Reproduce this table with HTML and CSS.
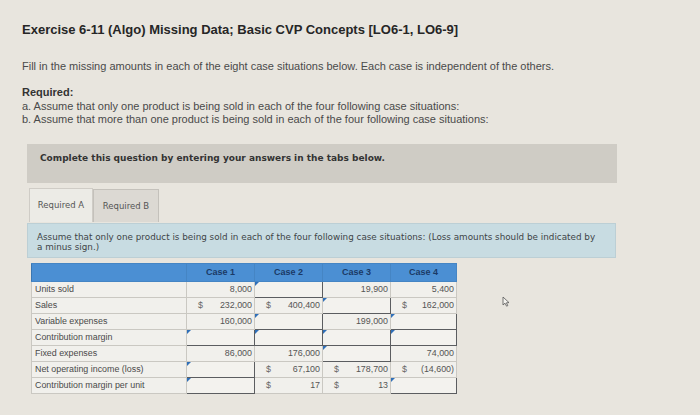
FILE: index.html
```html
<!DOCTYPE html>
<html>
<head>
<meta charset="utf-8">
<link rel="stylesheet" href="styles.css">
</head>
<body>
<div class="page">
  <h1 class="title">Exercise 6-11 (Algo) Missing Data; Basic CVP Concepts [LO6-1, LO6-9]</h1>
  <p class="intro">Fill in the missing amounts in each of the eight case situations below. Each case is independent of the others.</p>
  <div class="req">
    <div class="req-head">Required:</div>
    <div>a. Assume that only one product is being sold in each of the four following case situations:</div>
    <div>b. Assume that more than one product is being sold in each of the four following case situations:</div>
  </div>
  <div class="banner">Complete this question by entering your answers in the tabs below.</div>
  <div class="tabs">
    <div class="tab active">Required A</div>
    <div class="tab">Required B</div>
  </div>
  <div class="info">Assume that only one product is being sold in each of the four following case situations: (Loss amounts should be indicated by a minus sign.)</div>
  <table class="grid">
    <colgroup>
      <col class="c-label"><col class="c-case"><col class="c-case"><col class="c-case"><col class="c-case4">
    </colgroup>
    <thead>
      <tr><th></th><th>Case 1</th><th>Case 2</th><th>Case 3</th><th>Case 4</th></tr>
    </thead>
    <tbody>
      <tr><td class="lbl">Units sold</td><td class="val">8,000</td><td class="inp"></td><td class="val">19,900</td><td class="val">5,400</td></tr>
      <tr><td class="lbl">Sales</td><td class="val"><span class="cur">$</span>232,000</td><td class="val"><span class="cur">$</span>400,400</td><td class="inp"></td><td class="val"><span class="cur">$</span>162,000</td></tr>
      <tr><td class="lbl">Variable expenses</td><td class="val">160,000</td><td class="inp"></td><td class="val">199,000</td><td class="inp"></td></tr>
      <tr><td class="lbl">Contribution margin</td><td class="inp"></td><td class="inp"></td><td class="inp"></td><td class="inp"></td></tr>
      <tr><td class="lbl">Fixed expenses</td><td class="val">86,000</td><td class="val">176,000</td><td class="inp"></td><td class="val">74,000</td></tr>
      <tr><td class="lbl">Net operating income (loss)</td><td class="inp"></td><td class="val"><span class="cur">$</span>67,100</td><td class="val"><span class="cur">$</span>178,700</td><td class="val"><span class="cur">$</span>(14,600)</td></tr>
      <tr><td class="lbl">Contribution margin per unit</td><td class="inp"></td><td class="val"><span class="cur">$</span>17</td><td class="val"><span class="cur">$</span>13</td><td class="inp"></td></tr>
    </tbody>
  </table>
  <svg class="pointer" width="8" height="11" viewBox="0 0 8 11"><path d="M1 1 L1 9 L3 7.2 L4.6 10.2 L5.8 9.6 L4.4 6.8 L7 6.6 Z" fill="#f4f3ef" stroke="#555" stroke-width="0.8"/></svg>
</div>
</body>
</html>
```
FILE: styles.css
```css
html, body { margin: 0; padding: 0; }
body {
  background: #e8e5de;
  width: 700px;
  height: 415px;
  overflow: hidden;
  font-family: "Liberation Sans", Arial, sans-serif;
  color: #444;
}
.page {
  position: relative;
  padding: 21px 0 0 22px;
}
.title {
  margin: 0;
  font-size: 13px;
  line-height: 18px;
  font-weight: bold;
  color: #262626;
}
.intro {
  margin: 21px 0 0 0;
  font-size: 11px;
  line-height: 13px;
  color: #4a4a4a;
}
.req {
  margin-top: 13px;
  font-size: 11px;
  line-height: 13.5px;
  color: #4a4a4a;
}
.req-head { font-weight: bold; color: #333; }
.banner {
  margin: 17px 0 0 5px;
  width: 590px;
  height: 39px;
  box-sizing: border-box;
  padding: 9px 0 0 13px;
  background: #cfccc5;
  font-family: "DejaVu Sans", Verdana, sans-serif;
  font-weight: bold;
  font-size: 9px;
  color: #333;
}
.tabs {
  display: flex;
  margin: 5px 0 0 7px;
  height: 34px;
  align-items: flex-end;
}
.tab {
  box-sizing: border-box;
  height: 33px;
  width: 66px;
  padding-top: 11px;
  text-align: center;
  font-family: "DejaVu Sans", Verdana, sans-serif;
  font-size: 8.5px;
  color: #555;
  background: #dcd9d3;
  border: 1px solid #c4c1bb;
  border-bottom: none;
}
.tab.active {
  width: 64px;
  height: 34px;
  background: #ecebe6;
  border-color: #cfccc6;
}
.info {
  margin: 1px 0 0 5px;
  width: 589px;
  height: 35px;
  box-sizing: border-box;
  padding: 8px 14px 0 9px;
  background: #c8dce2;
  border: 1px solid #bccfd5;
  font-family: "DejaVu Sans", Verdana, sans-serif;
  font-size: 8.8px;
  line-height: 10px;
  color: #3e4447;
}
.grid {
  margin: 5px 0 0 9px;
  border-collapse: collapse;
  table-layout: fixed;
  width: 425px;
  font-size: 8.9px;
}
.c-label { width: 155px; }
.c-case { width: 68px; }
.c-case4 { width: 66px; }
.grid th {
  height: 17px;
  padding: 0;
  background: #4b8fd3;
  color: #1b3a66;
  font-weight: bold;
  font-size: 9px;
  border: 1px solid #4585c4;
  border-left-color: #3b76b0;
}
.grid td {
  height: 15px;
  padding: 0 2px;
  border: 1px solid #cac8c2;
  background: #f1f0ec;
  color: #555;
  white-space: nowrap;
}
.grid td.lbl { padding-left: 3px; color: #4a4a4a; }
.grid td.val { text-align: right; }
.grid td.val .cur { float: left; padding-left: 9px; color: #666; }
.grid td.inp {
  position: relative;
  background: #f3f2ee;
  border: 1.5px solid #5b5d60;
}
.grid td.inp::before {
  content: "";
  position: absolute;
  left: 0;
  top: 0;
  width: 0;
  height: 0;
  border-top: 4px solid #2f6fb8;
  border-right: 4px solid transparent;
}
.pointer {
  position: absolute;
  left: 502px;
  top: 296px;
}
```
